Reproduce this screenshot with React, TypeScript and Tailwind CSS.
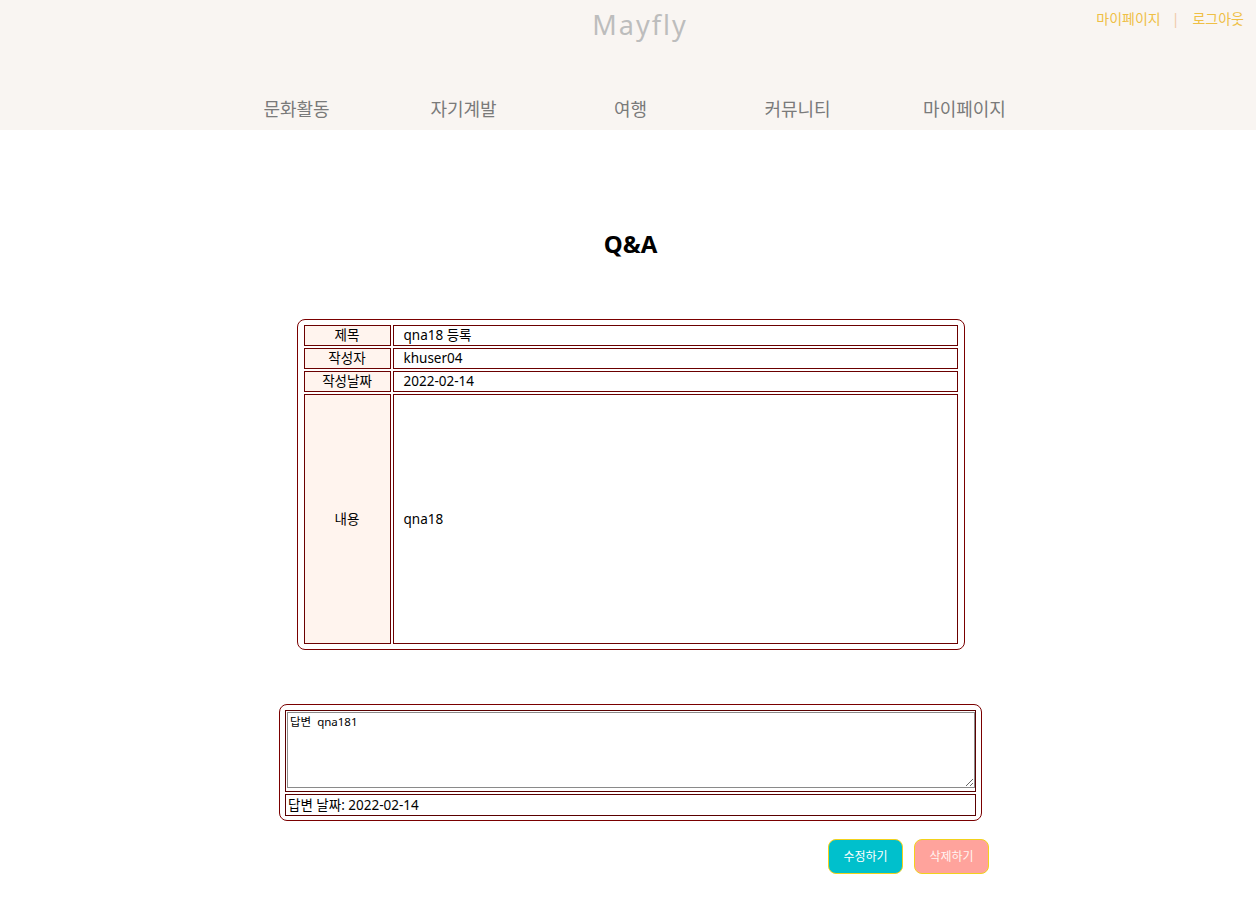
import React from "react";

const font = "font-['Noto_Sans','Noto_Sans_CJK_KR',sans-serif]";

const navItems = ["문화활동", "자기계발", "여행", "커뮤니티", "마이페이지"];

const rows = [
  { label: "제목", value: "qna18 등록" },
  { label: "작성자", value: "khuser04" },
  { label: "작성날짜", value: "2022-02-14" },
];

export default function App() {
  return (
    <div className={`min-h-screen bg-white text-black ${font}`}>
      {/* Header */}
      <header className="h-[130px] bg-[#f9f5f2]">
        <div className="grid grid-cols-[1fr_auto_1fr] pt-[7px] pl-[24px]">
          <div />
          <div className="text-[27px] leading-[36px] tracking-[2px] text-[#bdbdbd]">Mayfly</div>
          <div className="flex justify-end pr-[12px] pt-[3px] text-[14px] leading-[18px] text-[#efbf45]">
            <a href="#">마이페이지</a>
            <span className="ml-[11px] mr-[13px] text-[#f0c8a8]">|</span>
            <a href="#">로그아웃</a>
          </div>
        </div>
        <nav className="mt-[54px] flex justify-center pl-[5px]">
          <div className="grid grid-cols-5 w-[835px]">
            {navItems.map((n) => (
              <a key={n} href="#" className="text-center text-[18px] leading-[24px] text-[#7a7a7a]">
                {n}
              </a>
            ))}
          </div>
        </nav>
      </header>

      {/* Title */}
      <h2 className="mt-[98px] text-center text-[24px] leading-[32px] font-bold pl-[5px]">Q&amp;A</h2>

      {/* Question box */}
      <div className="mt-[59px] flex justify-center pl-[5px]">
        <div className="w-[668px] rounded-[8px] border border-[#7a0000] px-[4px] py-[3px]">
          <table className="w-full border-separate border-spacing-[2px] text-[13.5px]">
            <tbody>
              {rows.map((r) => (
                <tr key={r.label}>
                  <td className="h-[21px] w-[87px] border border-[#6b0000] bg-[#fff4ee] p-0 text-center leading-[19px]">
                    {r.label}
                  </td>
                  <td className="h-[21px] border border-[#6b0000] p-0 pl-[10px] leading-[19px]">{r.value}</td>
                </tr>
              ))}
              <tr>
                <td className="h-[250px] w-[87px] border border-[#6b0000] bg-[#fff4ee] p-0 text-center">내용</td>
                <td className="h-[250px] border border-[#6b0000] p-0 pl-[10px]">qna18</td>
              </tr>
            </tbody>
          </table>
        </div>
      </div>

      {/* Answer box */}
      <div className="mt-[54px] flex justify-center pl-[5px]">
        <div className="w-[703px] rounded-[8px] border border-[#7a0000] px-[5px] pt-[5px] pb-[4px]">
          <div className="border border-[#5a0000] pl-[1px] pt-[1px] pb-[3px]">
            <textarea
              readOnly
              defaultValue={"답변  qna181"}
              className={`block h-[76px] w-full border border-[#8a8a8a] px-[2px] py-[2px] text-[11.5px] leading-[14px] outline-none ${font}`}
            />
          </div>
          <div className="mt-[2px] h-[22px] border border-[#5a0000] pl-[2px] text-[13.5px] leading-[20px]">
            답변 날짜: 2022-02-14
          </div>
        </div>
      </div>

      {/* Buttons */}
      <div className="mt-[18px] flex justify-center pl-[5px]">
        <div className="flex w-[703px] justify-end gap-[11px] mr-[-14px]">
          <button className="h-[35px] w-[75px] rounded-[8px] border border-[#f2d21b] bg-[#00c0cc] text-[12px] text-white">
            수정하기
          </button>
          <button className="h-[35px] w-[75px] rounded-[8px] border border-[#f2d21b] bg-[#ffa39c] text-[12px] text-[#fff4f2]">
            삭제하기
          </button>
        </div>
      </div>
    </div>
  );
}
